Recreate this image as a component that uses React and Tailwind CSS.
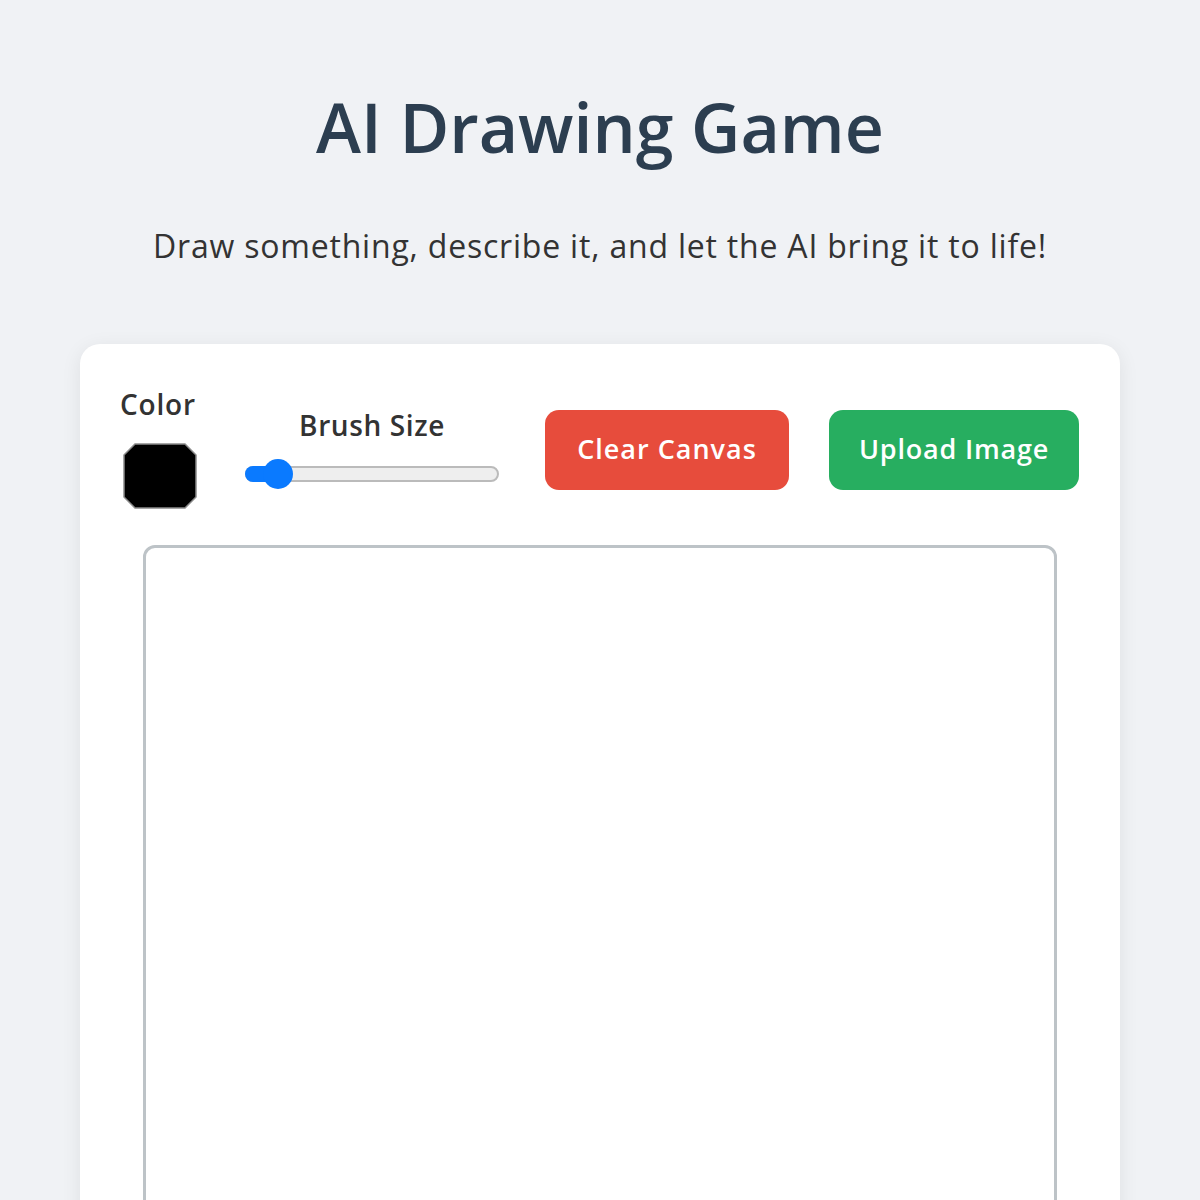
import { useState } from 'react';

const font = { fontFamily: '"Open Sans", "Noto Sans", sans-serif' };

function Swatch({ color }) {
  return (
    <svg width="74" height="66" viewBox="0 0 74 66">
      <polygon
        points="12,1 62,1 73,12 73,54 62,65 12,65 1,54 1,12"
        fill={color}
        stroke="#8a8a8a"
        strokeWidth="1.5"
      />
    </svg>
  );
}

function BrushSlider({ value, min = 1, max = 50 }) {
  // 254px track, 30px thumb
  const pct = (value - min) / (max - min);
  const center = 15 + pct * (254 - 30);
  return (
    <div className="relative w-[254px] h-[30px] flex items-center">
      <div className="w-full h-[16px] rounded-full bg-[#eeeeee] border-2 border-[#bbbbbb]" />
      <div className="absolute left-0 h-[16px] rounded-l-full bg-[#0a7aff]" style={{ width: center }} />
      <div
        className="absolute w-[30px] h-[30px] rounded-full bg-[#0a7aff]"
        style={{ left: center - 15 }}
      />
    </div>
  );
}

export default function App() {
  const [color] = useState('#000000');
  const [brush] = useState(5);

  return (
    <div className="min-h-screen bg-[#f0f2f5] px-20 pt-[93px]" style={font}>
      <h1 className="text-center text-[68px] leading-none font-semibold text-[#2c3e50]">
        AI Drawing Game
      </h1>
      <p className="mt-[61px] text-center text-[32px] tracking-[0.8px] text-[#333333]">
        Draw something, describe it, and let the AI bring it to life!
      </p>

      <div className="mt-[74px] bg-white rounded-[20px] shadow-[0_4px_20px_rgba(0,0,0,0.08)] px-10 pt-[46px] h-[900px]">
        <div className="flex items-center">
          <div className="flex flex-col items-start">
            <span className="text-[28px] font-semibold tracking-[0.8px] text-[#333333] leading-none">Color</span>
            <div className="mt-[25px] ml-[3px]">
              <Swatch color={color} />
            </div>
          </div>

          <div className="ml-[48px] flex flex-col items-center">
            <span className="text-[28px] font-semibold tracking-[0.6px] text-[#333333] leading-none">Brush Size</span>
            <div className="mt-[20px]">
              <BrushSlider value={brush} />
            </div>
          </div>

          <button className="ml-[46px] w-[244px] h-[80px] rounded-[14px] bg-[#e74c3c] text-white text-[27px] tracking-[1px] font-semibold">
            Clear Canvas
          </button>
          <button className="ml-[40px] w-[250px] h-[80px] rounded-[14px] bg-[#27ae60] text-white text-[27px] tracking-[0.8px] font-semibold">
            Upload Image
          </button>
        </div>

        <div className="mt-[36px] mx-auto w-[914px] h-[700px] rounded-[12px] border-[3px] border-[#bdc3c7] bg-white" />
      </div>
    </div>
  );
}
